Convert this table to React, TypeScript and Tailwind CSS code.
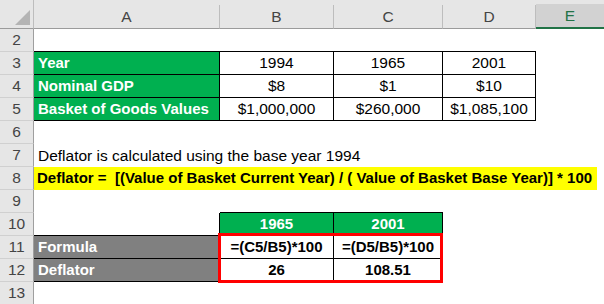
import React from "react";

// ── Layout constants ────────────────────────────────────────────────────────

const colW = {
	A: "w-[186px]",
	B: "w-[114px]",
	C: "w-[109px]",
	D: "w-[93px]",
};

const font: React.CSSProperties = {
	fontFamily: '"Liberation Sans", Arial, sans-serif',
};

// ── Pieces ──────────────────────────────────────────────────────────────────

function ColHead({ label, w, selected }: { label: string; w: string; selected?: boolean }) {
	return (
		<div className={`${w} h-full shrink-0 flex flex-col`}>
			<div className="h-[6px]" />
			<div
				className={
					selected
						? "flex-1 flex items-center justify-center bg-[#d2d2d2] border-b-2 border-b-[#217346] text-[#217346]"
						: "flex-1 flex items-center justify-center border-r border-r-[#bdbdbd] border-b border-b-[#9b9b9b] text-[#444]"
				}
			>
				{label}
			</div>
		</div>
	);
}

function Row({ n, children }: { n: number; children?: React.ReactNode }) {
	return (
		<div className="flex h-[23px]">
			<div className="w-[34px] shrink-0 bg-[#e6e6e6] border-r border-r-[#9f9f9f] border-b border-b-[#d0d0d0] flex items-center justify-center text-[#444]">
				{n}
			</div>
			{children}
		</div>
	);
}

function Cell({
	w,
	className = "",
	children,
}: {
	w: string;
	className?: string;
	children?: React.ReactNode;
}) {
	return (
		<div className={`${w} shrink-0 h-full flex items-center whitespace-nowrap ${className}`}>
			{children}
		</div>
	);
}

// ── Sheet ───────────────────────────────────────────────────────────────────

const greenLabel = "bg-[#00b050] text-white font-bold text-[15px] pl-1 border-r border-b border-black";
const valueCell = "justify-center border-r border-b border-black";
const boldValue = `${valueCell} font-bold text-[15px]`;

const dataRows = [
	{ n: 3, label: "Year", vals: ["1994", "1965", "2001"] },
	{ n: 4, label: "Nominal GDP", vals: ["$8", "$1", "$10"] },
	{ n: 5, label: "Basket of Goods Values", vals: ["$1,000,000", "$260,000", "$1,085,100"] },
];

export default function App() {
	return (
		<div className="relative w-[604px] h-[304px] overflow-hidden bg-white text-[15.5px] text-black" style={font}>
			{/* Column headers */}
			<div className="flex h-[29px] bg-[#e6e6e6]">
				<div className="w-[34px] shrink-0 h-full border-r border-r-[#bdbdbd] border-b border-b-[#9b9b9b] relative">
					<svg className="absolute left-0 top-0" width="33" height="28" viewBox="0 0 33 28">
						<polygon points="15,25 30,10 30,25" fill="#b4b4b4" />
					</svg>
				</div>
				<ColHead label="A" w={colW.A} />
				<ColHead label="B" w={colW.B} />
				<ColHead label="C" w={colW.C} />
				<ColHead label="D" w={colW.D} />
				<ColHead label="E" w="flex-1" selected />
			</div>

			{/* Row 2: top edge of the input table */}
			<Row n={2}>
				<Cell w={colW.A} className="border-b border-black" />
				<Cell w={colW.B} className="border-b border-black" />
				<Cell w={colW.C} className="border-b border-black" />
				<Cell w={colW.D} className="border-b border-black" />
			</Row>

			{dataRows.map((r) => (
				<Row key={r.n} n={r.n}>
					<Cell w={colW.A} className={greenLabel}>
						{r.label}
					</Cell>
					<Cell w={colW.B} className={valueCell}>
						{r.vals[0]}
					</Cell>
					<Cell w={colW.C} className={valueCell}>
						{r.vals[1]}
					</Cell>
					<Cell w={colW.D} className={valueCell}>
						{r.vals[2]}
					</Cell>
				</Row>
			))}

			<Row n={6} />

			<Row n={7}>
				<Cell w="flex-1" className="pl-1">
					Deflator is calculated using the base year 1994
				</Cell>
			</Row>

			<Row n={8}>
				<Cell w="flex-1">
					<div className="h-full w-[563px] bg-[#ffff00] pl-[3px] flex items-center font-bold text-[15px] whitespace-pre">
						{"Deflator =  [(Value of Basket Current Year) / ( Value of Basket Base Year)] * 100"}
					</div>
				</Cell>
			</Row>

			{/* Row 9: top edge of the result table */}
			<Row n={9}>
				<Cell w={colW.A} />
				<Cell w={colW.B} className="border-b border-black" />
				<Cell w={colW.C} className="border-b border-black" />
			</Row>

			<Row n={10}>
				<Cell w={colW.A} className="border-r border-b border-black" />
				<Cell w={colW.B} className="bg-[#00b050] text-white font-bold text-[15px] justify-center border-r border-b border-black">
					1965
				</Cell>
				<Cell w={colW.C} className="bg-[#00b050] text-white font-bold text-[15px] justify-center border-r border-b border-black">
					2001
				</Cell>
			</Row>

			<Row n={11}>
				<Cell w={colW.A} className="bg-[#808080] text-white font-bold text-[15px] pl-1 border-r border-b border-black">
					Formula
				</Cell>
				<Cell w={colW.B} className={boldValue}>
					=(C5/B5)*100
				</Cell>
				<Cell w={colW.C} className={boldValue}>
					=(D5/B5)*100
				</Cell>
			</Row>

			<Row n={12}>
				<Cell w={colW.A} className="bg-[#808080] text-white font-bold text-[15px] pl-1 border-r border-b border-black">
					Deflator
				</Cell>
				<Cell w={colW.B} className={boldValue}>
					26
				</Cell>
				<Cell w={colW.C} className={boldValue}>
					108.51
				</Cell>
			</Row>

			<Row n={13} />

			{/* Red highlight around B11:C12 */}
			<div className="absolute left-[218px] top-[233px] w-[225px] h-[50px] border-[3px] border-[#ff0000]" />
		</div>
	);
}
